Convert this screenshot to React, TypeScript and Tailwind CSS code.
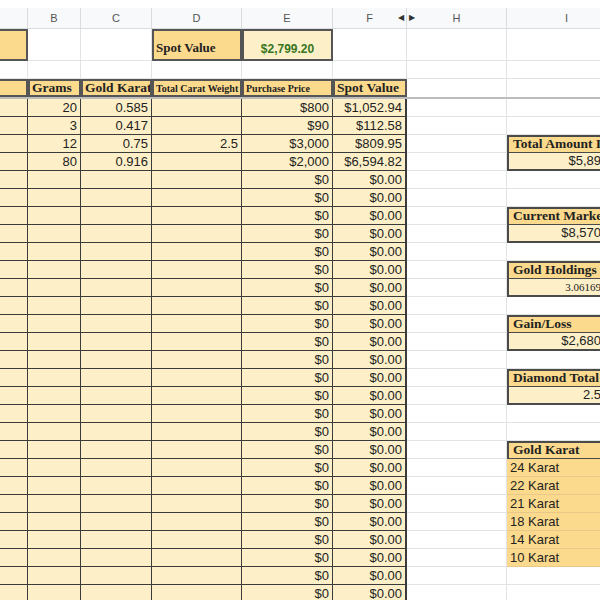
import React from "react";

const W = [28, 53, 71, 90, 91, 74, 100, 120];
const data: [string, string, string, string, string][] = [
  ["20", "0.585", "", "$800", "$1,052.94"],
  ["3", "0.417", "", "$90", "$112.58"],
  ["12", "0.75", "2.5", "$3,000", "$809.95"],
  ["80", "0.916", "", "$2,000", "$6,594.82"],
];
const sans = { fontFamily: "Arial, 'Liberation Sans', sans-serif" };
const serif = { fontFamily: "'Liberation Serif', 'DejaVu Serif', serif" };

const grid = "border-r border-b border-[#e2e3e3]";
const dcell = "border-r border-b border-[#3b3b3b] bg-[#fdf0c8]";

function Cell({ w, className = "", children, style }: { w: number; className?: string; children?: React.ReactNode; style?: React.CSSProperties }) {
  return (
    <div className={"shrink-0 h-full flex items-center overflow-hidden whitespace-nowrap " + className} style={{ width: w, ...style }}>
      {children}
    </div>
  );
}

const panel: Record<number, { t: string; kind: "h" | "v" | "k"; serifV?: boolean }> = {
  2: { t: "Total Amount Inv", kind: "h" },
  3: { t: "$5,89", kind: "v" },
  6: { t: "Current Market V", kind: "h" },
  7: { t: "$8,570", kind: "v" },
  9: { t: "Gold Holdings (T", kind: "h" },
  10: { t: "3.06169", kind: "v", serifV: true },
  12: { t: "Gain/Loss", kind: "h" },
  13: { t: "$2,680", kind: "v" },
  15: { t: "Diamond Total C", kind: "h" },
  16: { t: "2.5", kind: "v" },
  19: { t: "Gold Karat", kind: "h" },
  20: { t: "24 Karat", kind: "k" },
  21: { t: "22 Karat", kind: "k" },
  22: { t: "21 Karat", kind: "k" },
  23: { t: "18 Karat", kind: "k" },
  24: { t: "14 Karat", kind: "k" },
  25: { t: "10 Karat", kind: "k" },
};

function PanelCell({ i }: { i: number }) {
  const p = panel[i];
  if (!p) return <Cell w={W[7]} className="border-b border-[#e2e3e3]" />;
  if (p.kind === "h")
    return (
      <Cell w={W[7]} className="bg-[#fcda8d] border-t-2 border-l-2 border-b border-[#4a4a4a] pl-[4px] font-bold text-[13.5px] text-[#222]" style={serif}>
        {p.t}
      </Cell>
    );
  if (p.kind === "v")
    return (
      <Cell w={W[7]} className="bg-[#fdf0c8] border-b-2 border-l-2 border-[#4a4a4a] justify-end pr-[26px] text-[13px] text-[#222]" style={p.serifV ? { ...serif, fontSize: 11 } : sans}>
        {p.t}
      </Cell>
    );
  return (
    <Cell w={W[7]} className="bg-[#fcda8d] border-b border-[#e8c98a] pl-[3px] text-[13px] text-[#222]" style={sans}>
      {p.t}
    </Cell>
  );
}

export default function App() {
  const rows = Array.from({ length: 28 }, (_, i) => i);
  return (
    <div className="w-[600px] h-[600px] overflow-hidden bg-white text-[13px]" style={sans}>
      <div className="h-[8px]" />
      <div className="flex h-[21px] bg-[#f8f9fa] text-[11px] text-[#555] border-b border-[#dadcdf]">
        {["", "B", "C", "D", "E", "F", "H", "I"].map((l, k) => (
          <Cell key={k} w={W[k]} className={"justify-center border-r border-[#dadcdf] relative"}>
            {l}
            {k === 5 && <span className="absolute right-[2px] text-[8px] text-[#333]">◀</span>}
            {k === 6 && <span className="absolute left-[2px] text-[8px] text-[#333]">▶</span>}
          </Cell>
        ))}
      </div>
      <div className="flex h-[32px]">
        <Cell w={W[0]} className="bg-[#fcda8d] border-y-2 border-r-2 border-[#555]" />
        <Cell w={W[1]} className={grid} />
        <Cell w={W[2]} className={grid} />
        <Cell w={W[3]} className="bg-[#fcda8d] border-2 border-[#555] pl-[2px] pt-[6px] font-bold text-[13px] text-[#222]" style={serif}>Spot Value</Cell>
        <Cell w={W[4]} className="bg-[#fdf0c8] border-2 border-[#555] justify-center pt-[8px] font-bold text-[12px] text-[#38761d]">$2,799.20</Cell>
        <Cell w={W[5]} className={grid} />
        <Cell w={W[6]} className={grid} />
        <Cell w={W[7]} className="border-b border-[#e2e3e3]" />
      </div>
      <div className="flex h-[18px]">
        {W.map((w, k) => <Cell key={k} w={w} className={grid} />)}
      </div>
      <div className="flex h-[20px] border-b-2 border-[#bdbdbd]">
        <Cell w={W[0]} className="bg-[#fcda8d] border-y-2 border-r-2 border-[#555]" />
        {["Grams", "Gold Karat", "Total Carat Weight", "Purchase Price", "Spot Value"].map((t, k) => (
          <Cell key={k} w={W[k + 1]} className={"bg-[#fcda8d] border-2 border-[#555] pl-[2px] font-bold text-[#222] " + (k === 2 || k === 3 ? "text-[10px]" : "text-[13.5px]")} style={serif}>
            {t}
          </Cell>
        ))}
        <Cell w={W[6]} className="border-r border-[#e2e3e3]" />
        <Cell w={W[7]} />
      </div>
      {rows.map((i) => {
        const d = data[i];
        return (
          <div key={i} className="flex h-[18px] text-[13px] text-[#222]">
            <Cell w={W[0]} className={dcell} />
            <Cell w={W[1]} className={dcell + " justify-end pr-[3px]"}>{d ? d[0] : ""}</Cell>
            <Cell w={W[2]} className={dcell + " justify-end pr-[3px]"}>{d ? d[1] : ""}</Cell>
            <Cell w={W[3]} className={dcell + " justify-end pr-[3px]"}>{d ? d[2] : ""}</Cell>
            <Cell w={W[4]} className={dcell + " justify-end pr-[3px]"}>{d ? d[3] : "$0"}</Cell>
            <Cell w={W[5]} className={dcell + " justify-end pr-[3px] border-r-2"}>{d ? d[4] : "$0.00"}</Cell>
            <Cell w={W[6]} className={grid} />
            <PanelCell i={i} />
          </div>
        );
      })}
    </div>
  );
}
